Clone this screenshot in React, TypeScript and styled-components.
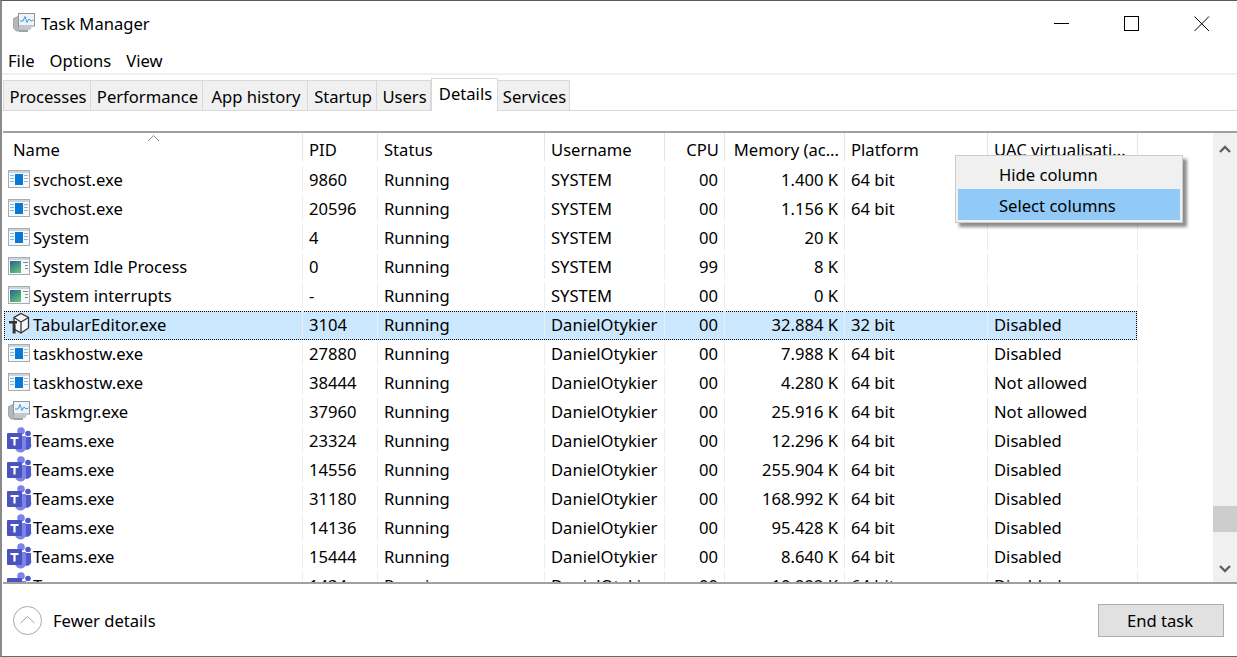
import React from 'react';
import styled, { createGlobalStyle } from 'styled-components';

const GlobalStyle = createGlobalStyle`
  html, body {
    margin: 0;
    padding: 0;
    background: #fff;
  }
  body {
    font-family: "Noto Sans", "Open Sans", sans-serif;
    font-size: 16.6px;
    color: #000;
  }
`;

const COLUMNS = '300px 75px 167px 120px 60px 120px 143px 150px';

const Window = styled.div`
  width: 1237px;
  height: 657px;
  box-sizing: border-box;
  border-top: 1px solid #5a5a5a;
  border-left: 2px solid #8a8a8a;
  border-bottom: 1px solid #6a6a6a;
  display: flex;
  flex-direction: column;
  overflow: hidden;
  position: relative;
  background: #fff;
`;

const TitleBar = styled.div`
  height: 44px;
  display: flex;
  align-items: center;
  padding-left: 11px;
  flex-shrink: 0;
`;

const TitleText = styled.span`
  margin-left: 6px;
`;

const WindowButtons = styled.div`
  margin-left: auto;
  display: flex;
  margin-right: 27px;
  gap: 54px;
  margin-top: 1px;

  svg {
    display: block;
  }
`;

const MenuBar = styled.div`
  display: flex;
  gap: 15px;
  align-items: center;
  padding: 2px 0 0 6px;
  height: 26px;
  flex-shrink: 0;
  border-bottom: 2px solid #f0f0f0;
`;

const MenuItem = styled.span``;

const TabRow = styled.div`
  height: 36px;
  box-sizing: border-box;
  display: flex;
  align-items: flex-end;
  padding-left: 1px;
  border-bottom: 1px solid #d9d9d9;
  flex-shrink: 0;
`;

const Tab = styled.div<{ $w: number; $active?: boolean }>`
  width: ${p => p.$w}px;
  box-sizing: border-box;
  height: ${p => (p.$active ? 33 : 30)}px;
  margin-bottom: ${p => (p.$active ? -1 : 0)}px;
  background: ${p => (p.$active ? '#fff' : '#f0f0f0')};
  border: 1px solid #d9d9d9;
  border-left-width: ${p => (p.$active ? 1 : 0)}px;
  border-bottom: none;
  display: flex;
  justify-content: center;
  align-items: center;
  padding-left: 2px;
  padding-bottom: ${p => (p.$active ? 4 : 0)}px;
  padding-top: ${p => (p.$active ? 0 : 1)}px;
  z-index: 1;

  &:first-child {
    border-left-width: 1px;
  }
`;

const TabSpacer = styled.div`
  height: 20px;
  flex-shrink: 0;
`;

const TableArea = styled.div`
  height: 453px;
  box-sizing: border-box;
  margin-left: 1px;
  border-top: 2px solid #a0a0a0;
  border-bottom: 2px solid #a0a0a0;
  display: flex;
  flex-shrink: 0;
  overflow: hidden;
`;

const TableBody = styled.div`
  width: 1209px;
  flex-shrink: 0;
  overflow: hidden;
`;

const HeaderRow = styled.div`
  display: grid;
  grid-template-columns: ${COLUMNS};
  height: 33px;
  position: relative;
`;

const HeaderCell = styled.div<{ $right?: boolean; $pad?: number }>`
  display: flex;
  align-items: center;
  justify-content: ${p => (p.$right ? 'flex-end' : 'flex-start')};
  padding: 4px 5px 0 ${p => p.$pad ?? 6}px;
  box-sizing: border-box;
  border-right: 1px solid #e5e5e5;
  white-space: nowrap;
  overflow: hidden;

  &:last-child {
    border-right: none;
  }
`;

const SortCaret = styled.svg`
  position: absolute;
  left: 144px;
  top: 1px;
`;

const Row = styled.div`
  display: grid;
  grid-template-columns: ${COLUMNS};
  height: 29px;
  position: relative;
`;

const SelectionBox = styled.div`
  position: absolute;
  left: 1px;
  top: 0;
  width: 1133px;
  height: 29px;
  box-sizing: border-box;
  background: #cce8ff;
  border: 1px dotted #000;
`;

const Cell = styled.div<{ $right?: boolean }>`
  display: flex;
  align-items: center;
  justify-content: ${p => (p.$right ? 'flex-end' : 'flex-start')};
  padding: 0 6px;
  box-sizing: border-box;
  border-right: 1px solid #eaeef5;
  white-space: nowrap;
  overflow: hidden;
  position: relative;

  &:last-child {
    border-right: none;
  }
`;

const NameCell = styled(Cell)`
  padding-left: 5px;
  gap: 3px;
  overflow: visible;

  svg {
    flex-shrink: 0;
    position: relative;
  }
`;

const ScrollBar = styled.div`
  width: 24px;
  margin-left: 1px;
  background: #f0f0f0;
  display: flex;
  flex-direction: column;
  align-items: center;
  position: relative;
`;

const ScrollArrow = styled.svg<{ $bottom?: boolean }>`
  position: absolute;
  left: 5px;
  ${p => (p.$bottom ? 'bottom: 8px;' : 'top: 11px;')}
`;

const ScrollThumb = styled.div`
  position: absolute;
  top: 373px;
  left: 0;
  width: 24px;
  height: 26px;
  background: #cdcdcd;
`;

const Footer = styled.div`
  flex: 1;
  display: flex;
  align-items: center;
  padding: 0 13px 0 11px;
`;

const FewerDetails = styled.div`
  display: flex;
  align-items: center;
  gap: 11px;

  span {
    padding-top: 1px;
  }
`;

const EndTask = styled.button`
  margin-left: auto;
  width: 126px;
  height: 33px;
  margin-top: 1px;
  background: #e1e1e1;
  border: 1px solid #adadad;
  font: inherit;
  color: #000;
  padding: 0 2px 0 0;
`;

const ContextMenu = styled.div`
  position: absolute;
  left: 953px;
  top: 154px;
  width: 228px;
  height: 68px;
  box-sizing: border-box;
  background: #f0f0f0;
  border: 1px solid #ccc;
  padding: 2px;
  box-shadow: 4px 4px 3px rgba(0, 0, 0, 0.45);
  z-index: 5;
`;

const ContextItem = styled.div<{ $hot?: boolean }>`
  height: 31px;
  box-sizing: border-box;
  display: flex;
  align-items: center;
  padding: 2px 0 0 41px;
  background: ${p => (p.$hot ? '#91c9f7' : 'transparent')};
`;

const ServiceIcon = () => (
  <svg width="22" height="20" viewBox="0 0 22 20">
    <rect x="0.5" y="1.5" width="21" height="17" fill="#f6f8fa" stroke="#a4acb4" />
    <rect x="1" y="2" width="20" height="2" fill="#cdd5dc" />
    <rect x="7" y="5" width="8" height="11" fill="#0a78d7" />
    <rect x="2" y="6" width="4" height="1" fill="#7fbbe6" />
    <rect x="2" y="9" width="4" height="1" fill="#7fbbe6" />
    <rect x="2" y="12" width="4" height="1" fill="#7fbbe6" />
    <rect x="16" y="6" width="4" height="1" fill="#aab3bb" />
    <rect x="16" y="9" width="4" height="1" fill="#aab3bb" />
    <rect x="16" y="12" width="4" height="1" fill="#aab3bb" />
  </svg>
);

const SystemIcon = () => (
  <svg width="22" height="20" viewBox="0 0 22 20">
    <defs>
      <linearGradient id="sysFill" x1="0" y1="0" x2="0.6" y2="1">
        <stop offset="0" stopColor="#2a5f96" />
        <stop offset="1" stopColor="#62bd78" />
      </linearGradient>
    </defs>
    <rect x="0.5" y="1.5" width="21" height="17" fill="#f6f8fa" stroke="#a4acb4" />
    <rect x="1" y="2" width="20" height="2" fill="#cdd5dc" />
    <rect x="2" y="5" width="11" height="12" fill="url(#sysFill)" />
    <rect x="15" y="6" width="5" height="1" fill="#7b8792" />
    <rect x="17" y="9" width="3" height="1" fill="#5cb87c" />
    <rect x="17" y="12" width="3" height="1" fill="#7b8792" />
  </svg>
);

// monitor with a pulse line in front of a grey tower
const TaskmgrIcon = () => (
  <svg width="22" height="20" viewBox="0 0 22 20">
    <path d="M0.5 5.5 L6 3 V18 H3 L0.5 15 Z" fill="#b4b8bc" stroke="#8e9296" strokeWidth="0.7" />
    <rect x="5.5" y="0.5" width="16" height="12.5" fill="#eef4f9" stroke="#8e969c" />
    <path d="M7 8 L10 8 L12 3.5 L14 9.5 L16 6 L18 8 L20.5 7" fill="none" stroke="#3b9ad6" strokeWidth="1" />
    <path d="M6 14 H19 L17 17 H6 Z" fill="#c2c6ca" />
    <rect x="6" y="17" width="9" height="2" fill="#9ea2a6" />
  </svg>
);

const TeamsIcon = () => (
  <svg width="26" height="26" viewBox="0 0 26 26" style={{ margin: '-3px -2px' }}>
    <circle cx="15" cy="4" r="3.8" fill="#7b83eb" />
    <circle cx="22" cy="6.5" r="2.8" fill="#5059c9" />
    <path d="M17 10 H25 V17 A4 4 0 0 1 17 20 Z" fill="#5059c9" />
    <path d="M9 9 H20 V19 A5.5 5.5 0 0 1 9 21 Z" fill="#7b83eb" />
    <rect x="1" y="6" width="15" height="16" rx="1" fill="#4b53bc" />
    <path d="M4.5 10 H12.5 V12 H9.6 V18.5 H7.4 V12 H4.5 Z" fill="#fff" />
  </svg>
);

// isometric cube with a small hammer on its left side
const TabularIcon = () => (
  <svg width="22" height="24" viewBox="0 0 22 24" style={{ margin: '-2px 0' }}>
    <path d="M13 1.5 L20.5 5.5 V16 L13 21 L6 17 V5.5 Z" fill="#f7f7f7" stroke="#333" strokeWidth="1.3" />
    <path d="M6 5.5 L13 10 L20.5 5.5 M13 10 V21" fill="none" stroke="#333" strokeWidth="1.3" />
    <path d="M1 9 H9 V11.5 H7.4 V13 H4.6 V11.5 H1 Z" fill="#333" />
    <rect x="4.6" y="13" width="3" height="8.5" fill="#333" />
  </svg>
);

const icons = {
  service: ServiceIcon,
  system: SystemIcon,
  taskmgr: TaskmgrIcon,
  teams: TeamsIcon,
  tabular: TabularIcon,
};

type RowData = {
  icon: keyof typeof icons;
  name: string;
  pid: string;
  user: string;
  cpu: string;
  mem: string;
  plat: string;
  uac: string;
  selected?: boolean;
};

const rows: RowData[] = [
  { icon: 'service', name: 'svchost.exe', pid: '9860', user: 'SYSTEM', cpu: '00', mem: '1.400 K', plat: '64 bit', uac: '' },
  { icon: 'service', name: 'svchost.exe', pid: '20596', user: 'SYSTEM', cpu: '00', mem: '1.156 K', plat: '64 bit', uac: '' },
  { icon: 'service', name: 'System', pid: '4', user: 'SYSTEM', cpu: '00', mem: '20 K', plat: '', uac: '' },
  { icon: 'system', name: 'System Idle Process', pid: '0', user: 'SYSTEM', cpu: '99', mem: '8 K', plat: '', uac: '' },
  { icon: 'system', name: 'System interrupts', pid: '-', user: 'SYSTEM', cpu: '00', mem: '0 K', plat: '', uac: '' },
  { icon: 'tabular', name: 'TabularEditor.exe', pid: '3104', user: 'DanielOtykier', cpu: '00', mem: '32.884 K', plat: '32 bit', uac: 'Disabled', selected: true },
  { icon: 'service', name: 'taskhostw.exe', pid: '27880', user: 'DanielOtykier', cpu: '00', mem: '7.988 K', plat: '64 bit', uac: 'Disabled' },
  { icon: 'service', name: 'taskhostw.exe', pid: '38444', user: 'DanielOtykier', cpu: '00', mem: '4.280 K', plat: '64 bit', uac: 'Not allowed' },
  { icon: 'taskmgr', name: 'Taskmgr.exe', pid: '37960', user: 'DanielOtykier', cpu: '00', mem: '25.916 K', plat: '64 bit', uac: 'Not allowed' },
  { icon: 'teams', name: 'Teams.exe', pid: '23324', user: 'DanielOtykier', cpu: '00', mem: '12.296 K', plat: '64 bit', uac: 'Disabled' },
  { icon: 'teams', name: 'Teams.exe', pid: '14556', user: 'DanielOtykier', cpu: '00', mem: '255.904 K', plat: '64 bit', uac: 'Disabled' },
  { icon: 'teams', name: 'Teams.exe', pid: '31180', user: 'DanielOtykier', cpu: '00', mem: '168.992 K', plat: '64 bit', uac: 'Disabled' },
  { icon: 'teams', name: 'Teams.exe', pid: '14136', user: 'DanielOtykier', cpu: '00', mem: '95.428 K', plat: '64 bit', uac: 'Disabled' },
  { icon: 'teams', name: 'Teams.exe', pid: '15444', user: 'DanielOtykier', cpu: '00', mem: '8.640 K', plat: '64 bit', uac: 'Disabled' },
  { icon: 'teams', name: 'Teams.exe', pid: '1434', user: 'DanielOtykier', cpu: '00', mem: '10.992 K', plat: '64 bit', uac: 'Disabled' },
];

const tabs = [
  { label: 'Processes', w: 88 },
  { label: 'Performance', w: 112 },
  { label: 'App history', w: 105 },
  { label: 'Startup', w: 69 },
  { label: 'Users', w: 54 },
  { label: 'Details', w: 67, active: true },
  { label: 'Services', w: 72 },
];

export default function App() {
  return (
    <>
      <GlobalStyle />
      <Window>
        <TitleBar>
          <TaskmgrIcon />
          <TitleText>Task Manager</TitleText>
          <WindowButtons>
            <svg width="16" height="16" viewBox="0 0 16 16">
              <path d="M0 7.5 H15" stroke="#000" fill="none" />
            </svg>
            <svg width="16" height="16" viewBox="0 0 16 16">
              <rect x="0.5" y="0.5" width="14" height="14" stroke="#000" fill="none" />
            </svg>
            <svg width="16" height="16" viewBox="0 0 16 16">
              <path d="M0.5 0.5 L15 15 M15 0.5 L0.5 15" stroke="#000" fill="none" />
            </svg>
          </WindowButtons>
        </TitleBar>
        <MenuBar>
          <MenuItem>File</MenuItem>
          <MenuItem>Options</MenuItem>
          <MenuItem>View</MenuItem>
        </MenuBar>
        <TabRow>
          {tabs.map(t => (
            <Tab key={t.label} $w={t.w} $active={t.active}>{t.label}</Tab>
          ))}
        </TabRow>
        <TabSpacer />
        <TableArea>
          <TableBody>
            <HeaderRow>
              <SortCaret width="13" height="8" viewBox="0 0 13 8">
                <path d="M1 7 L6.5 1.5 L12 7" fill="none" stroke="#8a8a8a" />
              </SortCaret>
              <HeaderCell $pad={10}>Name</HeaderCell>
              <HeaderCell>PID</HeaderCell>
              <HeaderCell>Status</HeaderCell>
              <HeaderCell>Username</HeaderCell>
              <HeaderCell $right $pad={0}>CPU</HeaderCell>
              <HeaderCell $right $pad={8}>Memory (ac...</HeaderCell>
              <HeaderCell>Platform</HeaderCell>
              <HeaderCell>UAC virtualisati...</HeaderCell>
              <HeaderCell />
            </HeaderRow>
            {rows.map((r, i) => {
              const Icon = icons[r.icon];
              return (
                <Row key={i}>
                  {r.selected && <SelectionBox />}
                  <NameCell><Icon />{r.name}</NameCell>
                  <Cell>{r.pid}</Cell>
                  <Cell>Running</Cell>
                  <Cell>{r.user}</Cell>
                  <Cell $right>{r.cpu}</Cell>
                  <Cell $right>{r.mem}</Cell>
                  <Cell>{r.plat}</Cell>
                  <Cell>{r.uac}</Cell>
                  <Cell />
                </Row>
              );
            })}
          </TableBody>
          <ScrollBar>
            <ScrollArrow width="14" height="10" viewBox="0 0 14 10">
              <path d="M2 8 L7 3 L12 8" fill="none" stroke="#606060" strokeWidth="2.4" />
            </ScrollArrow>
            <ScrollThumb />
            <ScrollArrow $bottom width="14" height="10" viewBox="0 0 14 10">
              <path d="M2 2 L7 7 L12 2" fill="none" stroke="#606060" strokeWidth="2.4" />
            </ScrollArrow>
          </ScrollBar>
        </TableArea>
        <Footer>
          <FewerDetails>
            <svg width="29" height="29" viewBox="0 0 29 29">
              <circle cx="14.5" cy="14.5" r="14" fill="#fff" stroke="#a8a8a8" />
              <path d="M7.5 17 L14.5 10.5 L21.5 17" fill="none" stroke="#a0a0a0" />
            </svg>
            <span>Fewer details</span>
          </FewerDetails>
          <EndTask>End task</EndTask>
        </Footer>
        <ContextMenu>
          <ContextItem>Hide column</ContextItem>
          <ContextItem $hot>Select columns</ContextItem>
        </ContextMenu>
      </Window>
    </>
  );
}
